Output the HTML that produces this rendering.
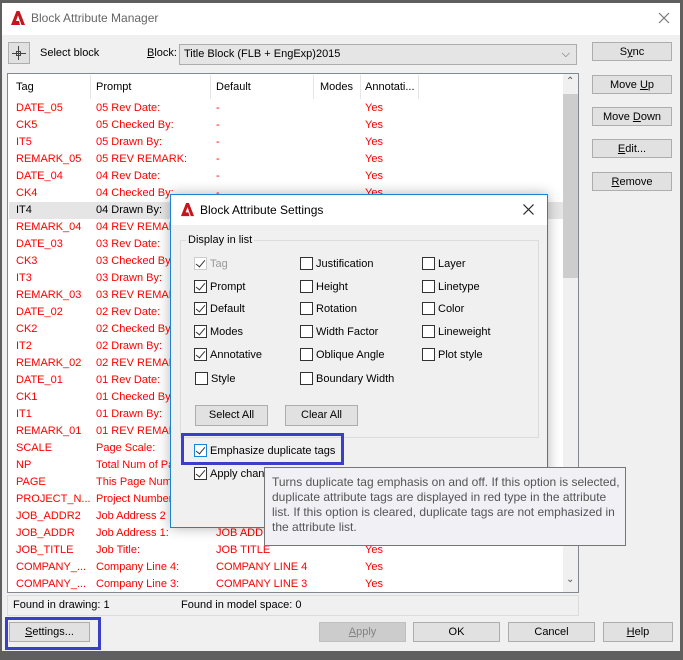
<!DOCTYPE html>
<html><head><meta charset="utf-8"><style>
*{box-sizing:border-box;margin:0;padding:0}
body{width:683px;height:660px;background:#5f5f5f;position:relative;overflow:hidden;font-family:"Liberation Sans",sans-serif;font-size:11px;color:#000}
.a{position:absolute}
.btn{position:absolute;background:#e1e1e1;border:1px solid #adadad;text-align:center;line-height:18px;font-size:11px}
.row{position:absolute;left:9px;width:554px;height:17px;line-height:17px;color:#f00}
.row span{position:absolute;white-space:nowrap;overflow:hidden}
.cb{position:absolute;width:13px;height:13px;border:1px solid #333;background:#fff}
.cb.k::after{content:"";position:absolute;left:3px;top:0px;width:4px;height:8px;border:solid #333;border-width:0 1.5px 1.5px 0;transform:rotate(40deg)}
.lb{position:absolute;white-space:nowrap;margin-top:1px}
</style></head><body>
<div class="a" style="left:2px;top:3px;width:678px;height:648px;background:#f0f0f0"></div>
<div class="a" style="left:2px;top:3px;width:678px;height:32px;background:#fff"></div>
<svg class="a" style="left:10px;top:10px" width="16" height="16" viewBox="0 0 16 16"><path d="M1 15L6.5 1h3L15 15h-3.5L8 5.5 6 11h3l1 4z" fill="#c4161c"/></svg>
<div class="a" style="left:31px;top:11px;color:#666;font-size:12px">Block Attribute Manager</div>
<svg class="a" style="left:658px;top:12px" width="12" height="12"><path d="M1 1L11 11M11 1L1 11" stroke="#777" stroke-width="1.2"/></svg>

<div class="a" style="left:8px;top:42px;width:22px;height:22px;border:1px solid #adadad;background:#e1e1e1"></div>
<div class="a" style="left:18px;top:46px;width:1px;height:14px;background:#444"></div>
<div class="a" style="left:12px;top:53px;width:14px;height:1px;background:#444"></div>
<div class="a" style="left:16px;top:51px;width:5px;height:5px;border:1px solid #444"></div>
<div class="a" style="left:40px;top:47px">Select block</div>
<div class="a" style="left:147px;top:47px"><u>B</u>lock:</div>
<div class="a" style="left:179px;top:44px;width:398px;height:21px;border:1px solid #adadad;background:#e5e5e5;padding-left:4px;line-height:19px">Title Block (FLB + EngExp)2015<span style="position:absolute;right:6px;top:0;color:#555">⌵</span></div>

<div class="btn" style="left:592px;top:42px;width:80px;height:19px">S<u>y</u>nc</div>
<div class="btn" style="left:592px;top:75px;width:80px;height:19px">Move <u>U</u>p</div>
<div class="btn" style="left:592px;top:107px;width:80px;height:19px">Move <u>D</u>own</div>
<div class="btn" style="left:592px;top:139px;width:80px;height:19px"><u>E</u>dit...</div>
<div class="btn" style="left:592px;top:172px;width:80px;height:19px"><u>R</u>emove</div>

<div class="a" style="left:7px;top:73px;width:572px;height:520px;border:1px solid #828790;background:#fff"></div>
<div class="a" style="left:563px;top:74px;width:15px;height:518px;background:#f0f0f0"></div>
<div class="a" style="left:563px;top:94px;width:15px;height:184px;background:#cdcdcd"></div>
<div class="a" style="left:566px;top:76px;color:#555;font-size:10px">⌃</div>
<div class="a" style="left:566px;top:574px;color:#555;font-size:10px">⌄</div>
<div class="a" style="left:8px;top:74px;width:555px;height:25px;background:#fff"></div>
<div class="a" style="left:16px;top:81px">Tag</div>
<div class="a" style="left:90px;top:75px;width:1px;height:24px;background:#e5e5e5"></div>
<div class="a" style="left:96px;top:81px">Prompt</div>
<div class="a" style="left:210px;top:75px;width:1px;height:24px;background:#e5e5e5"></div>
<div class="a" style="left:216px;top:81px">Default</div>
<div class="a" style="left:313px;top:75px;width:1px;height:24px;background:#e5e5e5"></div>
<div class="a" style="left:320px;top:81px">Modes</div>
<div class="a" style="left:360px;top:75px;width:1px;height:24px;background:#e5e5e5"></div>
<div class="a" style="left:365px;top:81px">Annotati...</div>
<div class="a" style="left:418px;top:75px;width:1px;height:24px;background:#e5e5e5"></div>

<div class="row" style="top:100px"><span style="left:7px">DATE_05</span><span style="left:87px">05 Rev Date:</span><span style="left:207px">-</span><span style="left:356px">Yes</span></div>
<div class="row" style="top:117px"><span style="left:7px">CK5</span><span style="left:87px">05 Checked By:</span><span style="left:207px">-</span><span style="left:356px">Yes</span></div>
<div class="row" style="top:134px"><span style="left:7px">IT5</span><span style="left:87px">05 Drawn By:</span><span style="left:207px">-</span><span style="left:356px">Yes</span></div>
<div class="row" style="top:151px"><span style="left:7px">REMARK_05</span><span style="left:87px">05 REV REMARK:</span><span style="left:207px">-</span><span style="left:356px">Yes</span></div>
<div class="row" style="top:168px"><span style="left:7px">DATE_04</span><span style="left:87px">04 Rev Date:</span><span style="left:207px">-</span><span style="left:356px">Yes</span></div>
<div class="row" style="top:185px"><span style="left:7px">CK4</span><span style="left:87px">04 Checked By:</span><span style="left:207px">-</span><span style="left:356px">Yes</span></div>
<div class="row" style="top:202px;background:#e5e5e5;color:#000"><span style="left:7px">IT4</span><span style="left:87px">04 Drawn By:</span></div>
<div class="row" style="top:219px"><span style="left:7px">REMARK_04</span><span style="left:87px">04 REV REMARK:</span></div>
<div class="row" style="top:236px"><span style="left:7px">DATE_03</span><span style="left:87px">03 Rev Date:</span></div>
<div class="row" style="top:253px"><span style="left:7px">CK3</span><span style="left:87px">03 Checked By:</span></div>
<div class="row" style="top:270px"><span style="left:7px">IT3</span><span style="left:87px">03 Drawn By:</span></div>
<div class="row" style="top:287px"><span style="left:7px">REMARK_03</span><span style="left:87px">03 REV REMARK:</span></div>
<div class="row" style="top:304px"><span style="left:7px">DATE_02</span><span style="left:87px">02 Rev Date:</span></div>
<div class="row" style="top:321px"><span style="left:7px">CK2</span><span style="left:87px">02 Checked By:</span></div>
<div class="row" style="top:338px"><span style="left:7px">IT2</span><span style="left:87px">02 Drawn By:</span></div>
<div class="row" style="top:355px"><span style="left:7px">REMARK_02</span><span style="left:87px">02 REV REMARK:</span></div>
<div class="row" style="top:372px"><span style="left:7px">DATE_01</span><span style="left:87px">01 Rev Date:</span></div>
<div class="row" style="top:389px"><span style="left:7px">CK1</span><span style="left:87px">01 Checked By:</span></div>
<div class="row" style="top:406px"><span style="left:7px">IT1</span><span style="left:87px">01 Drawn By:</span></div>
<div class="row" style="top:423px"><span style="left:7px">REMARK_01</span><span style="left:87px">01 REV REMARK:</span></div>
<div class="row" style="top:440px"><span style="left:7px">SCALE</span><span style="left:87px">Page Scale:</span></div>
<div class="row" style="top:457px"><span style="left:7px">NP</span><span style="left:87px">Total Num of Pages:</span></div>
<div class="row" style="top:474px"><span style="left:7px">PAGE</span><span style="left:87px">This Page Num:</span></div>
<div class="row" style="top:491px"><span style="left:7px">PROJECT_N...</span><span style="left:87px">Project Number:</span></div>
<div class="row" style="top:508px"><span style="left:7px">JOB_ADDR2</span><span style="left:87px">Job Address 2</span></div>
<div class="row" style="top:525px"><span style="left:7px">JOB_ADDR</span><span style="left:87px">Job Address 1:</span><span style="left:207px">JOB ADDRESS</span></div>
<div class="row" style="top:542px"><span style="left:7px">JOB_TITLE</span><span style="left:87px">Job Title:</span><span style="left:207px">JOB TITLE</span><span style="left:356px">Yes</span></div>
<div class="row" style="top:559px"><span style="left:7px">COMPANY_...</span><span style="left:87px">Company Line 4:</span><span style="left:207px">COMPANY LINE 4</span><span style="left:356px">Yes</span></div>
<div class="row" style="top:576px"><span style="left:7px">COMPANY_...</span><span style="left:87px">Company Line 3:</span><span style="left:207px">COMPANY LINE 3</span><span style="left:356px">Yes</span></div>

<div class="a" style="left:7px;top:595px;width:572px;height:21px;border:1px solid #dcdcdc"></div>
<div class="a" style="left:13px;top:599px">Found in drawing: 1</div>
<div class="a" style="left:181px;top:599px">Found in model space: 0</div>

<div class="a" style="left:5px;top:617px;width:96px;height:33px;border:3px solid #3b3fc8"></div>
<div class="btn" style="left:9px;top:622px;width:81px;height:20px"><u>S</u>ettings...</div>
<div class="btn" style="left:319px;top:622px;width:87px;height:20px;background:#ccc;border-color:#bfbfbf;color:#838383"><u>A</u>pply</div>
<div class="btn" style="left:413px;top:622px;width:87px;height:20px">OK</div>
<div class="btn" style="left:508px;top:622px;width:87px;height:20px">Cancel</div>
<div class="btn" style="left:603px;top:622px;width:70px;height:20px"><u>H</u>elp</div>

<!-- settings dialog -->
<div class="a" style="left:170px;top:194px;width:378px;height:334px;background:#f0f0f0;border:1px solid #1883d7;box-shadow:0 0 12px rgba(0,0,0,.3)"></div>
<div class="a" style="left:171px;top:195px;width:376px;height:30px;background:#fff"></div>
<svg class="a" style="left:180px;top:202px" width="15" height="15" viewBox="0 0 16 16"><path d="M1 15L6.5 1h3L15 15h-3.5L8 5.5 6 11h3l1 4z" fill="#c4161c"/></svg>
<div class="a" style="left:200px;top:203px;font-size:12px">Block Attribute Settings</div>
<svg class="a" style="left:523px;top:204px" width="11" height="11"><path d="M0.5 0.5L10.5 10.5M10.5 0.5L0.5 10.5" stroke="#222" stroke-width="1.2"/></svg>
<div class="a" style="left:180px;top:240px;width:359px;height:198px;border:1px solid #dcdcdc"></div>
<div class="a" style="left:186px;top:234px;background:#f0f0f0;padding:0 2px">Display in list</div>

<div class="cb k" style="left:194px;top:257px;border-color:#ccc"></div><div class="lb" style="left:210px;top:257px;color:#999">Tag</div>
<div class="cb k" style="left:194px;top:280px"></div><div class="lb" style="left:210px;top:280px">Prompt</div>
<div class="cb k" style="left:194px;top:302px"></div><div class="lb" style="left:210px;top:302px">Default</div>
<div class="cb k" style="left:194px;top:325px"></div><div class="lb" style="left:210px;top:325px">Modes</div>
<div class="cb k" style="left:194px;top:348px"></div><div class="lb" style="left:210px;top:348px">Annotative</div>
<div class="cb" style="left:195px;top:372px"></div><div class="lb" style="left:211px;top:372px">Style</div>

<div class="cb" style="left:300px;top:257px"></div><div class="lb" style="left:316px;top:257px">Justification</div>
<div class="cb" style="left:300px;top:280px"></div><div class="lb" style="left:316px;top:280px">Height</div>
<div class="cb" style="left:300px;top:302px"></div><div class="lb" style="left:316px;top:302px">Rotation</div>
<div class="cb" style="left:300px;top:325px"></div><div class="lb" style="left:316px;top:325px">Width Factor</div>
<div class="cb" style="left:300px;top:348px"></div><div class="lb" style="left:316px;top:348px">Oblique Angle</div>
<div class="cb" style="left:300px;top:372px"></div><div class="lb" style="left:316px;top:372px">Boundary Width</div>

<div class="cb" style="left:422px;top:257px"></div><div class="lb" style="left:438px;top:257px">Layer</div>
<div class="cb" style="left:422px;top:280px"></div><div class="lb" style="left:438px;top:280px">Linetype</div>
<div class="cb" style="left:422px;top:302px"></div><div class="lb" style="left:438px;top:302px">Color</div>
<div class="cb" style="left:422px;top:325px"></div><div class="lb" style="left:438px;top:325px">Lineweight</div>
<div class="cb" style="left:422px;top:348px"></div><div class="lb" style="left:438px;top:348px">Plot style</div>

<div class="btn" style="left:195px;top:405px;width:73px;height:21px;line-height:19px">Select All</div>
<div class="btn" style="left:285px;top:405px;width:73px;height:21px;line-height:19px">Clear All</div>

<div class="a" style="left:181px;top:433px;width:163px;height:32px;border:3px solid #3b3fc8"></div>
<div class="cb k" style="left:194px;top:444px;border-color:#1883d7"></div><div class="lb" style="left:210px;top:444px">Emphasize duplicate tags</div>
<div class="cb k" style="left:194px;top:467px"></div><div class="lb" style="left:210px;top:467px">Apply changes</div>

<div class="a" style="left:264px;top:467px;width:362px;height:79px;background:#f0f0f5;border:1px solid #767676;padding:7px 0 0 7px;color:#555;font-size:12px;line-height:15px;white-space:nowrap;overflow:hidden">Turns duplicate tag emphasis on and off. If this option is selected,<br>duplicate attribute tags are displayed in red type in the attribute<br>list. If this option is cleared, duplicate tags are not emphasized in<br>the attribute list.</div>
</body></html>
